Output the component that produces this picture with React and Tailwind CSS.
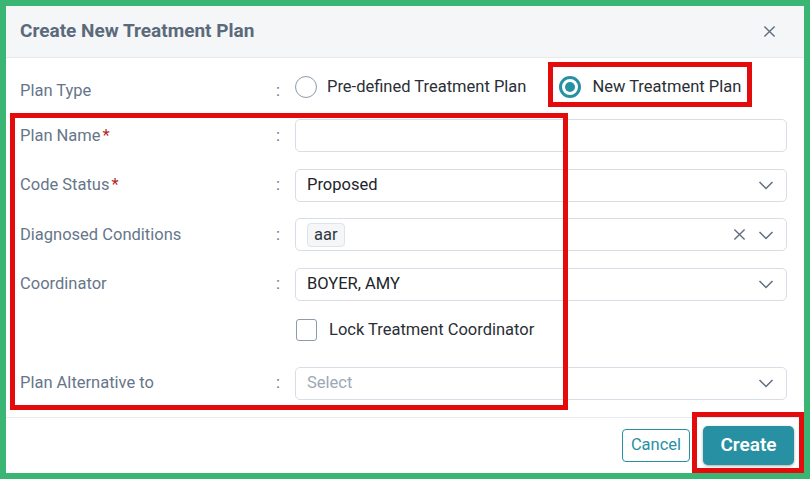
import React, { useState } from 'react';

const Chevron = () => (
  <svg className="w-[16px] h-[16px] text-[#5f6e7e]" viewBox="0 0 16 16" fill="none" stroke="currentColor" strokeWidth="1.5">
    <path d="M1.5 5 L8 11.5 L14.5 5" />
  </svg>
);

const Cross = ({ size = 14 }) => (
  <svg style={{ width: size, height: size }} className="text-[#5f6e7e]" viewBox="0 0 14 14" fill="none" stroke="currentColor" strokeWidth="1.5">
    <path d="M1.5 1.5 L12.5 12.5 M12.5 1.5 L1.5 12.5" />
  </svg>
);

function Row({ label, required, children }) {
  return (
    <div className="grid grid-cols-[256px_19px_1fr] items-center h-[33px]">
      <div className="text-[16.5px] text-[#66768a] pt-[1px]">
        {label}
        {required && <span className="text-[#b32424] ml-[2px]">*</span>}
      </div>
      <div className="text-[16.5px] text-[#66768a] pt-[1px]">:</div>
      <div className="pr-[17px] h-full">{children}</div>
    </div>
  );
}

function SelectBox({ children, clearable }) {
  return (
    <div className="h-full border border-[#d8dee6] rounded-[5px] flex items-center pl-[11px] pr-[12px]">
      <div className="flex-1 flex items-center pt-[1px]">{children}</div>
      {clearable && (
        <span className="mr-[12px] flex items-center"><Cross size={13} /></span>
      )}
      <Chevron />
    </div>
  );
}

export default function App() {
  const [planType, setPlanType] = useState('new');
  const [lock, setLock] = useState(false);

  return (
    <div className="relative w-[810px] h-[479px] font-['Roboto',sans-serif]">
      <div className="w-full h-full border-[6px] border-[#3bb574] bg-white flex flex-col">
        {/* header */}
        <div className="h-[52px] bg-[#f5f6f8] border-b border-[#e6e9ee] flex items-center justify-between pl-[14px] pr-[28px] shrink-0">
          <h2 className="text-[19px] font-bold text-[#5b6a7b]">Create New Treatment Plan</h2>
          <Cross size={13} />
        </div>

        {/* body */}
        <div className="pl-[14px] pt-[11px] pb-[17px] border-b border-[#e8ebef] flex flex-col">
          <div className="grid grid-cols-[256px_19px_1fr] items-center h-[36px]">
            <div className="text-[16.5px] text-[#66768a] pt-[9px]">Plan Type</div>
            <div className="text-[16.5px] text-[#66768a] pt-[9px]">:</div>
            <div className="flex items-center">
              <button onClick={() => setPlanType('pre')} className="flex items-center gap-[10px]">
                <span className={`w-[22px] h-[22px] rounded-full border flex items-center justify-center ${planType === 'pre' ? 'border-[#2791a3] border-2' : 'border-[#8d9bab]'}`}>
                  {planType === 'pre' && <span className="w-[10px] h-[10px] rounded-full bg-[#2791a3]" />}
                </span>
                <span className="text-[16.5px] text-[#2a2f36]">Pre-defined Treatment Plan</span>
              </button>
              <button onClick={() => setPlanType('new')} className="flex items-center gap-[11px] ml-[33px]">
                <span className={`w-[22px] h-[22px] rounded-full flex items-center justify-center ${planType === 'new' ? 'border-[3px] border-[#2791a3]' : 'border border-[#8d9bab]'}`}>
                  {planType === 'new' && <span className="w-[10px] h-[10px] rounded-full bg-[#2791a3]" />}
                </span>
                <span className="text-[16.5px] text-[#2a2f36]">New Treatment Plan</span>
              </button>
            </div>
          </div>

          <div className="mt-[14px] flex flex-col gap-[16.5px]">
            <Row label="Plan Name" required>
              <input className="w-full h-full border border-[#d8dee6] rounded-[5px] px-[11px] outline-none" />
            </Row>
            <Row label="Code Status" required>
              <SelectBox><span className="text-[16.5px] text-[#212529]">Proposed</span></SelectBox>
            </Row>
            <Row label="Diagnosed Conditions">
              <SelectBox clearable>
                <span className="h-[24px] px-[6px] flex items-center rounded-[4px] border border-[#dfe4ea] bg-[#f4f6f8] text-[16.5px] text-[#2e3640]">aar</span>
              </SelectBox>
            </Row>
            <Row label="Coordinator">
              <SelectBox><span className="text-[16.5px] text-[#212529]">BOYER, AMY</span></SelectBox>
            </Row>
          </div>

          <div className="grid grid-cols-[256px_19px_1fr] items-center mt-[17px] h-[22px]">
            <div />
            <div />
            <button onClick={() => setLock(!lock)} className="flex items-center gap-[12px] ml-[1px]">
              <span className="w-[21px] h-[22px] rounded-[3px] border border-[#8d9bab] bg-white flex items-center justify-center text-[#2791a3] text-[14px]">
                {lock ? '✓' : ''}
              </span>
              <span className="text-[16.5px] text-[#2a2f36]">Lock Treatment Coordinator</span>
            </button>
          </div>

          <div className="mt-[27px]">
            <Row label="Plan Alternative to">
              <SelectBox><span className="text-[16.5px] text-[#9ca8b5]">Select</span></SelectBox>
            </Row>
          </div>
        </div>

        {/* footer */}
        <div className="flex-1 flex items-center justify-end pr-[10px] gap-[13px]">
          <button className="h-[33px] w-[68px] rounded-[4px] border border-[#2791a3] text-[#2791a3] text-[16.5px]">Cancel</button>
          <button className="h-[39px] w-[91px] rounded-[5px] bg-[#2791a3] text-white text-[19px] font-semibold shadow-[0_1px_3px_rgba(0,0,0,0.35)]">Create</button>
        </div>
      </div>

      {/* annotation boxes */}
      <div className="absolute left-[548px] top-[62px] w-[204px] h-[45px] border-[5px] border-[#e30b0b] pointer-events-none" />
      <div className="absolute left-[10px] top-[113px] w-[558px] h-[297px] border-[5px] border-[#e30b0b] pointer-events-none" />
      <div className="absolute left-[692px] top-[412px] w-[112px] h-[61px] border-[5px] border-[#e30b0b] pointer-events-none" />
    </div>
  );
}
